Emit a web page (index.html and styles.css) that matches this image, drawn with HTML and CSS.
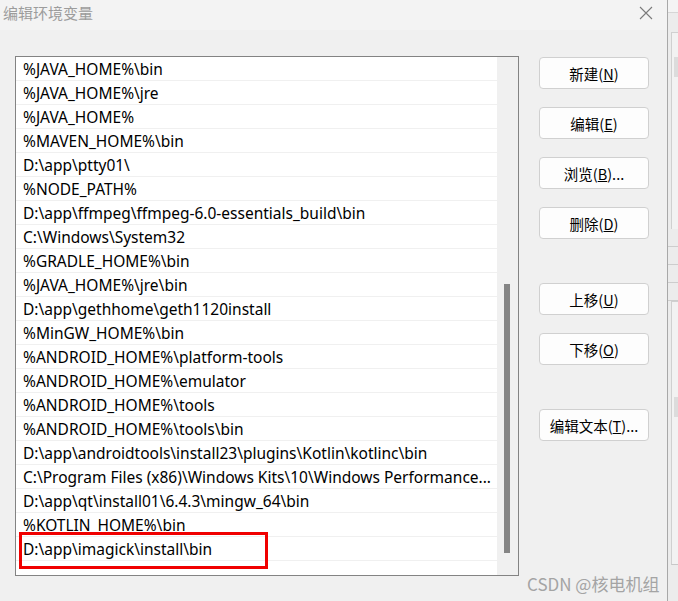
FILE: index.html
```html
<!DOCTYPE html>
<html>

<head>
	<title>编辑环境变量</title>
	<link rel="stylesheet" href="styles.css">
</head>

<body>
	<div class="dialog">
		<div class="title-bar">
			<span class="title">编辑环境变量</span>
			<svg class="close" width="14" height="14" viewBox="0 0 14 14">
				<path d="M1 1 L13 13 M13 1 L1 13" stroke="#7a7a7a" stroke-width="1.1" fill="none" />
			</svg>
		</div>

		<div class="content">
			<div class="list-box">
				<div class="rows">
					<div class="row">%JAVA_HOME%\bin</div>
					<div class="row">%JAVA_HOME%\jre</div>
					<div class="row">%JAVA_HOME%</div>
					<div class="row">%MAVEN_HOME%\bin</div>
					<div class="row">D:\app\ptty01\</div>
					<div class="row">%NODE_PATH%</div>
					<div class="row">D:\app\ffmpeg\ffmpeg-6.0-essentials_build\bin</div>
					<div class="row">C:\Windows\System32</div>
					<div class="row">%GRADLE_HOME%\bin</div>
					<div class="row">%JAVA_HOME%\jre\bin</div>
					<div class="row">D:\app\gethhome\geth1120install</div>
					<div class="row">%MinGW_HOME%\bin</div>
					<div class="row">%ANDROID_HOME%\platform-tools</div>
					<div class="row">%ANDROID_HOME%\emulator</div>
					<div class="row">%ANDROID_HOME%\tools</div>
					<div class="row">%ANDROID_HOME%\tools\bin</div>
					<div class="row">D:\app\androidtools\install23\plugins\Kotlin\kotlinc\bin</div>
					<div class="row">C:\Program Files (x86)\Windows Kits\10\Windows Performance...</div>
					<div class="row">D:\app\qt\install01\6.4.3\mingw_64\bin</div>
					<div class="row">%KOTLIN_HOME%\bin</div>
					<div class="row">D:\app\imagick\install\bin</div>
				</div>
				<div class="scrollbar">
					<div class="thumb"></div>
				</div>
				<div class="mark"></div>
			</div>

			<div class="buttons">
				<button>新建(<u>N</u>)</button>
				<button>编辑(<u>E</u>)</button>
				<button>浏览(<u>B</u>)...</button>
				<button>删除(<u>D</u>)</button>
				<button class="spaced">上移(<u>U</u>)</button>
				<button>下移(<u>O</u>)</button>
				<button class="spaced">编辑文本(<u>T</u>)...</button>
			</div>
		</div>

		<div class="watermark">CSDN @核电机组</div>
	</div>

	<div class="behind">
		<div class="behind-top"></div>
		<div class="behind-box"><div class="behind-thumb"></div></div>
		<div class="behind-line"></div>
		<div class="behind-line"></div>
		<div class="behind-line"></div>
		<div class="behind-line"></div>
		<div class="behind-box tall"><div class="behind-thumb low"></div></div>
	</div>
</body>

</html>
```

FILE: styles.css
```css
body {
	margin: 0;
	display: flex;
	height: 601px;
	overflow: hidden;
	background-color: #f0f0f0;
	font-family: "Noto Sans", "Noto Sans CJK SC", sans-serif;
}

.dialog {
	position: relative;
	width: 667px;
	border-right: 1px solid #a8a8a8;
	background-color: #f0f0f0;
}

.title-bar {
	display: flex;
	justify-content: space-between;
	align-items: center;
	height: 30px;
	padding: 0 14px 0 3px;
	background-color: #f3f3f3;
}

.title {
	margin-top: -5px;
	font-family: "Noto Sans CJK SC", sans-serif;
	font-size: 15px;
	color: #9c9c9c;
}

.close {
	margin-top: -4px;
}

.content {
	display: flex;
	gap: 20px;
	padding: 26px 0 0 15px;
}

.list-box {
	position: relative;
	display: flex;
	width: 502px;
	height: 518px;
	border: 1px solid #838383;
	background: white;
}

.rows {
	flex: 1;
	min-width: 0;
}

.row {
	height: 23px;
	line-height: 24px;
	padding-left: 7px;
	padding-right: 2px;
	border-bottom: 1px solid #f0f0f0;
	font-size: 15.5px;
	color: #000;
	white-space: nowrap;
	overflow: hidden;
}

.scrollbar {
	width: 21px;
	background-color: #f0f0f0;
	padding-top: 227px;
}

.thumb {
	width: 6px;
	height: 269px;
	margin-left: 7px;
	background-color: #858585;
}

.mark {
	position: absolute;
	left: 3px;
	top: 475px;
	width: 243px;
	height: 31px;
	border: 3px solid #f00000;
}

.buttons {
	display: flex;
	flex-direction: column;
	gap: 18px;
	padding-top: 1px;
}

button {
	width: 110px;
	height: 32px;
	padding: 0;
	font-family: "Noto Sans CJK SC", sans-serif;
	font-size: 14.5px;
	color: #000;
	background-color: #fdfdfd;
	border: 1px solid #d0d0d0;
	border-radius: 4px;
}

button.spaced {
	margin-top: 26px;
}

.watermark {
	position: absolute;
	left: 527px;
	top: 571px;
	font-family: "Noto Sans CJK SC", sans-serif;
	font-size: 17px;
	color: #a4a4a4;
}

.behind {
	flex: 1;
	display: flex;
	flex-direction: column;
	background-color: #ececec;
}

.behind-top {
	height: 12px;
	border-bottom: 1px solid #d6d6d6;
	background-color: #f4f4f4;
	margin-bottom: 19px;
}

.behind-box {
	height: 196px;
	margin-left: 3px;
	border-left: 1px solid #d0d0d0;
	border-top: 1px solid #d0d0d0;
	background-color: #f2f2f2;
}

.behind-box.tall {
	height: 262px;
	border-bottom: 1px solid #c8c8c8;
}

.behind-thumb {
	width: 4px;
	height: 20px;
	margin: 24px 0 0 2px;
	background-color: #dcdcdc;
}

.behind-thumb.low {
	margin-top: 95px;
}

.behind-line {
	height: 17px;
	border-bottom: 1px solid #cdcdcd;
}
```
